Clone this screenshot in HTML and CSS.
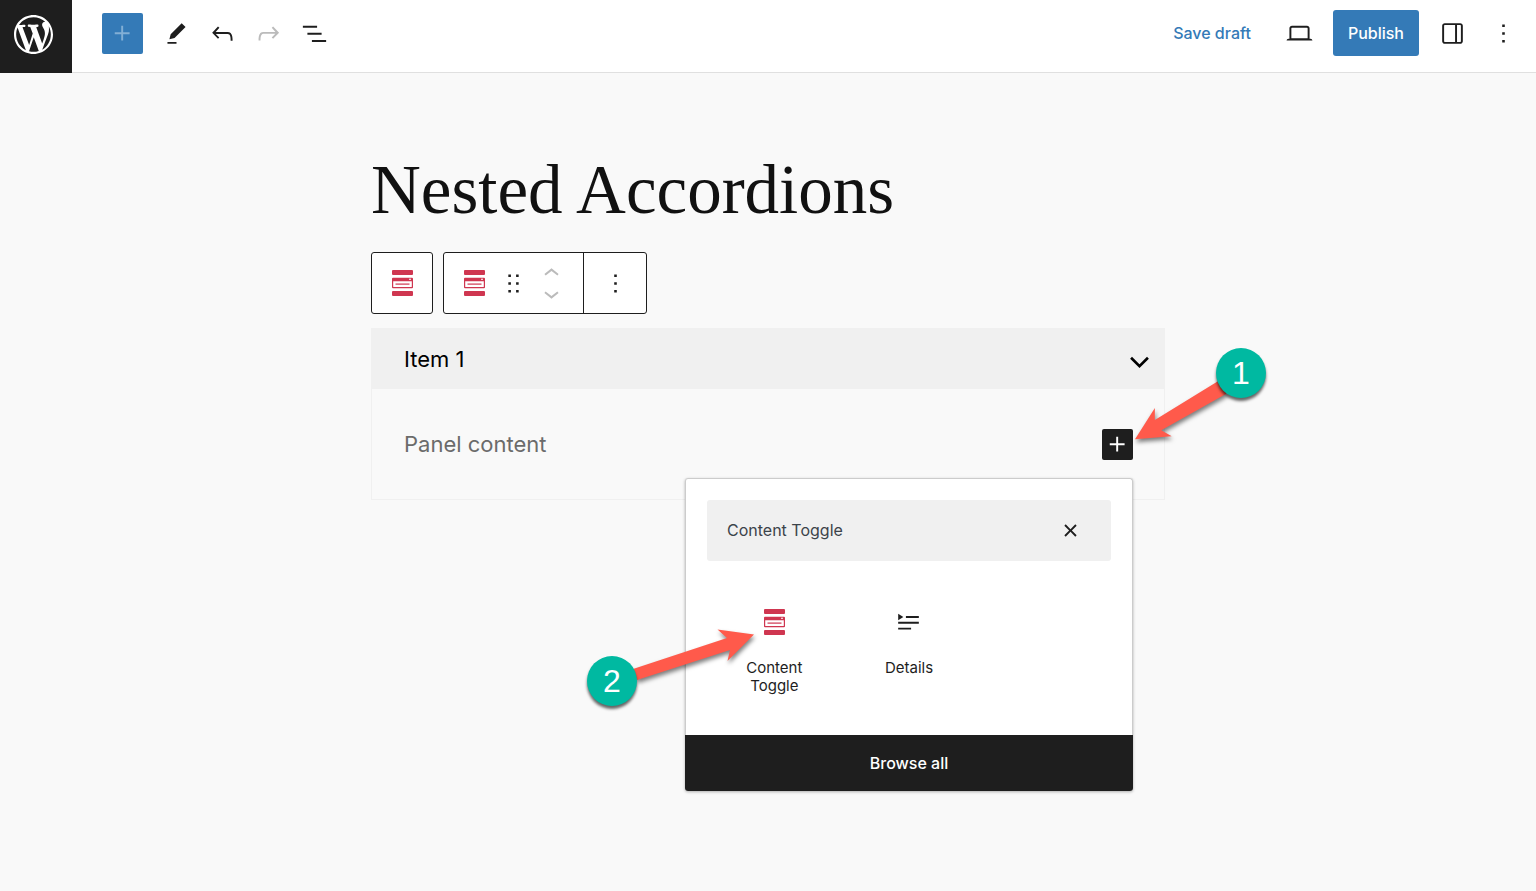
FILE: index.html
```html
<!DOCTYPE html>
<html lang="en">
<head>
<meta charset="utf-8">
<meta name="viewport" content="width=device-width, initial-scale=1">
<title>Nested Accordions</title>
<link rel="stylesheet" href="styles.css">
</head>
<body>
<svg class="sprite" aria-hidden="true">
  <symbol id="toggle" viewBox="0 0 21 26">
    <rect width="21" height="5" rx="1"/>
    <path fill-rule="evenodd" d="M1 7.700h19a1 1 0 0 1 1 1v8.600a1 1 0 0 1-1 1H1a1 1 0 0 1-1-1V8.700a1 1 0 0 1 1-1zM1.200 11.200v5.300a.6.6 0 0 0 .6.600h17.400a.6.6 0 0 0 .6-.6v-5.300zM17 8.800v1h2v-1z"/>
    <rect x="3.500" y="13.500" width="14" height="1.200"/>
    <rect y="21" width="21" height="5" rx="1"/>
  </symbol>
  <symbol id="plus" viewBox="0 0 24 24"><path d="M11 12.500V17.500H12.500V12.500H17.500V11H12.500V6H11V11H6V12.500H11Z"/></symbol>
  <symbol id="more" viewBox="0 0 24 24"><path d="M13 19h-2v-2h2v2zm0-6h-2v-2h2v2zm0-6h-2V5h2v2z"/></symbol>
</svg>

<header class="topbar">
  <a class="logo" href="#" aria-label="View posts">
    <svg viewBox="0 0 20 20"><path d="M20 10c0-5.510-4.490-10-10-10C4.480 0 0 4.490 0 10c0 5.520 4.480 10 10 10 5.510 0 10-4.480 10-10zM7.780 15.370L4.370 6.220c.55-.02 1.170-.08 1.170-.08.5-.06.44-1.130-.06-1.110 0 0-1.450.11-2.370.11-.18 0-.37 0-.58-.01C4.120 2.690 6.870 1.110 10 1.110c2.330 0 4.450.87 6.050 2.340-.68-.11-1.650.39-1.650 1.580 0 .74.45 1.360.9 2.100.35.61.55 1.360.55 2.460 0 1.490-1.400 5-1.400 5l-3.030-8.370c.54-.02.82-.17.82-.17.5-.05.44-1.250-.06-1.220 0 0-1.440.12-2.380.12-.87 0-2.330-.12-2.330-.12-.5-.03-.56 1.200-.06 1.220l.92.08 1.260 3.410zM17.410 10c.24-.64.74-1.870.43-4.250.7 1.290 1.050 2.710 1.050 4.250 0 3.290-1.730 6.240-4.400 7.780.97-2.590 1.940-5.200 2.920-7.780zM6.100 18.090C3.120 16.650 1.110 13.530 1.110 10c0-1.300.23-2.480.72-3.590C3.250 10.300 4.670 14.200 6.100 18.090zm4.030-6.630l2.580 6.980c-.86.29-1.760.45-2.710.45-.79 0-1.570-.11-2.290-.33.81-2.380 1.620-4.740 2.420-7.100z"/></svg>
  </a>
  <div class="tools">
    <button class="add" type="button" aria-label="Toggle block inserter"><svg class="icon"><use href="#plus"/></svg></button>
    <button class="tool" type="button" aria-label="Edit"><svg class="icon" viewBox="0 0 24 24"><path d="m19 7-3-3-8.500 8.500-1 4 4-1L19 7Zm-7 11.500H5V20h7v-1.500Z"/></svg></button>
    <button class="tool" type="button" aria-label="Undo"><svg class="icon" viewBox="0 0 24 24"><path d="M18.300 11.700c-.6-.6-1.400-.9-2.300-.9H6.700l2.900-3.300-1.100-1-4.500 5L8.500 16l1-1-2.700-2.700H16c.5 0 .9.2 1.300.5 1 1 1 3.400 1 4.500v.3h1.500v-.2c0-1.500 0-4.300-1.500-5.700z"/></svg></button>
    <button class="tool" type="button" aria-label="Redo" disabled><svg class="icon" viewBox="0 0 24 24"><path d="M15.600 6.500l-1.100 1 2.900 3.300H8c-.9 0-1.700.3-2.300.9-1.400 1.500-1.400 4.200-1.400 5.600v.2h1.500v-.3c0-1.100 0-3.500 1-4.500.3-.3.7-.5 1.300-.5h9.200L14.500 15l1.100 1.100 4.600-4.600-4.600-5z"/></svg></button>
    <button class="tool" type="button" aria-label="Document overview"><svg class="icon" viewBox="0 0 24 24"><path d="M3 6h11v1.500H3V6Zm3.500 5.500h11V13h-11v-1.500ZM21 17H10v1.500h11V17Z"/></svg></button>
  </div>
  <div class="actions">
    <button class="save" type="button">Save draft</button>
    <button class="tool" type="button" aria-label="Preview"><svg class="icon" viewBox="0 0 24 24"><path d="M20.500 16h-.7V8c0-1.100-.9-2-2-2H6.200c-1.100 0-2 .9-2 2v8h-.7c-.8 0-1.500.7-1.500 1.500h20c0-.8-.7-1.500-1.500-1.500zM5.700 8c0-.3.2-.5.5-.5h11.600c.3 0 .5.2.5.5v7.600H5.700V8z"/></svg></button>
    <button class="publish" type="button">Publish</button>
    <div class="panel-tools">
      <button class="tool" type="button" aria-label="Settings"><svg class="icon" viewBox="0 0 24 24"><path d="M18 4H6c-1.100 0-2 .9-2 2v12c0 1.100.9 2 2 2h12c1.100 0 2-.9 2-2V6c0-1.100-.9-2-2-2zm-4 14.500H6c-.3 0-.5-.2-.5-.5V6c0-.3.2-.5.5-.5h8v13zm4.500-.5c0 .3-.2.500-.5.500h-2.500v-13H18c.3 0 .5.2.5.500v12z"/></svg></button>
      <button class="tool" type="button" aria-label="Options"><svg class="icon"><use href="#more"/></svg></button>
    </div>
  </div>
</header>

<main class="canvas">
  <h1 class="title">Nested Accordions</h1>

  <div class="toolbars">
    <div class="toolbar">
      <button class="parent" type="button" aria-label="Select parent block"><svg class="toggle-icon"><use href="#toggle"/></svg></button>
    </div>
    <div class="toolbar">
      <div class="group">
        <button class="block-type" type="button" aria-label="Content Toggle"><svg class="toggle-icon"><use href="#toggle"/></svg></button>
        <button class="drag" type="button" aria-label="Drag"><svg class="icon" viewBox="0 0 24 24"><path d="M8 7h2V5H8v2zm0 6h2v-2H8v2zm0 6h2v-2H8v2zm6-14v2h2V5h-2zm0 8h2v-2h-2v2zm0 6h2v-2h-2v2z"/></svg></button>
        <div class="movers">
          <button type="button" aria-label="Move up" disabled><svg class="icon" viewBox="0 0 24 24"><path d="M6.500 12.400L12 8l5.500 4.400-.9 1.200L12 10l-4.500 3.600-1-1.200z"/></svg></button>
          <button type="button" aria-label="Move down" disabled><svg class="icon" viewBox="0 0 24 24"><path d="M17.500 11.600L12 16l-5.500-4.400.9-1.200L12 14l4.500-3.600 1 1.200z"/></svg></button>
        </div>
      </div>
      <button class="options" type="button" aria-label="Options"><svg class="icon"><use href="#more"/></svg></button>
    </div>
  </div>

  <section class="accordion">
    <button class="item" type="button" aria-expanded="true">Item 1
      <svg class="chevron" viewBox="0 0 18 12"><path d="M1 1.500l8 8 8-8"/></svg>
    </button>
    <div class="panel">
      <p class="hint">Panel content</p>
      <div class="inserter">
        <button class="insert" type="button" aria-label="Add block"><svg class="icon"><use href="#plus"/></svg></button>
        <div class="popover">
          <div class="popover-body">
            <div class="search">
              <input class="search-input" type="text" aria-label="Search blocks" value="Content Toggle">
              <button class="clear" type="button" aria-label="Reset search"><svg class="icon" viewBox="0 0 24 24"><path d="M12 13.060l3.712 3.713 1.061-1.060L13.061 12l3.712-3.712-1.060-1.060L12 10.938 8.288 7.227l-1.061 1.060L10.939 12l-3.712 3.712 1.060 1.061L12 13.061z"/></svg></button>
            </div>
            <div class="blocks">
              <button class="block" type="button"><span class="block-icon"><svg class="toggle-icon"><use href="#toggle"/></svg></span>Content Toggle</button>
              <button class="block" type="button"><span class="block-icon"><svg class="icon" viewBox="0 0 24 24"><path d="M4 16h10v1.500H4V16Zm0-4.500h16V13H4v-1.500ZM10 7h10v1.500H10V7Z"/><path d="m4 5.250 4 2.500-4 2.500v-5Z"/></svg></span>Details</button>
            </div>
          </div>
          <button class="browse" type="button">Browse all</button>
          <div class="callout callout-two">
            <svg class="arrow" viewBox="0 0 170 80"><path d="M167 5.500L130.500.5l9.500 8.500L46 40l4 11 93-30L140.500 32z"/></svg>
            <span class="badge">2</span>
          </div>
        </div>
        <div class="callout callout-one">
          <svg class="arrow" viewBox="0 0 132 94"><path d="M0 92L20 60.500v12L86 32l6 14-65.500 37L37 89z"/></svg>
          <span class="badge">1</span>
        </div>
      </div>
    </div>
  </section>
</main>
</body>
</html>
```
FILE: styles.css
```css
* { box-sizing: border-box; }

body {
  margin: 0;
  min-height: 100vh;
  background: #f9f9f9;
  color: #1e1e1e;
  font: 16px/20px Inter, "Liberation Sans", sans-serif;
}

button {
  display: flex;
  align-items: center;
  justify-content: center;
  margin: 0;
  padding: 0;
  border: 0;
  background: none;
  color: inherit;
  font: inherit;
}

.sprite { position: absolute; width: 0; height: 0; }
.icon { display: block; flex: none; width: 31px; height: 31px; fill: currentColor; }
.toggle-icon { display: block; flex: none; width: 21px; height: 26px; fill: #cf3650; }

.topbar {
  display: flex;
  height: 73px;
  background: #fff;
  border-bottom: 1px solid #e0e0e0;
}
.logo {
  display: flex;
  align-items: center;
  width: 72px;
  height: 73px;
  padding: 0 0 4px 14px;
  background: #1e1e1e;
}
.logo svg { width: 39px; height: 39px; fill: #fff; }
.tools, .actions { display: flex; align-items: center; padding-bottom: 6px; }
.tools { padding-left: 30px; }
.tool { width: 46px; height: 46px; }
.tool:disabled, .movers button:disabled { color: #bbb; }
.add {
  width: 41px;
  height: 41px;
  margin-right: 10px;
  border-radius: 2px;
  background: #347ab7;
  color: #82afd5;
}
.actions { gap: 10px; margin-left: auto; padding-right: 10px; }
.save { margin-right: 16px; color: #347ab7; font-weight: 500; }
.publish {
  height: 46px;
  padding: 0 15px;
  border-radius: 3px;
  background: #347ab7;
  color: #fff;
  font-weight: 500;
}
.panel-tools { display: flex; gap: 5px; }

.canvas { max-width: 794px; margin: 0 auto; padding-top: 77px; }
.title {
  margin: 0 0 22px;
  color: #111;
  font: 400 69px/80px "Liberation Serif", serif;
}

.toolbars { display: flex; gap: 10px; margin-bottom: 14px; }
.toolbar {
  display: flex;
  height: 62px;
  border: 1px solid #1e1e1e;
  border-radius: 3px;
  background: #fff;
}
.parent { width: 60px; }
.group { display: flex; padding: 0 16px 0 15px; }
.block-type { width: 31px; }
.drag { width: 46px; }
.movers { display: flex; flex-direction: column; justify-content: center; width: 31px; }
.movers button { height: 20px; }
.options { width: 63px; border-left: 1px solid #1e1e1e; }

.item {
  justify-content: space-between;
  width: 100%;
  height: 61px;
  padding: 0 16px 0 33px;
  background: #f0f0f0;
  color: #000;
  font-size: 22px;
}
.chevron { width: 19px; height: 13px; margin-top: 8px; fill: none; stroke: #000; stroke-width: 2.500; }
.panel {
  display: flex;
  align-items: center;
  justify-content: space-between;
  height: 111px;
  padding: 0 31px 0 32px;
  border: 1px solid #f0f0f0;
  border-top: 0;
}
.hint { margin: 0; color: #6b6b6b; font-size: 22px; }
.inserter { position: relative; }
.insert { width: 31px; height: 31px; border-radius: 2px; background: #1e1e1e; color: #fff; }

.popover {
  position: absolute;
  top: 49px;
  right: 0;
  width: 448px;
  border-radius: 3px;
  background: #fff;
  box-shadow: 0 1px 3px rgba(0, 0, 0, .3);
}
.popover-body {
  padding: 21px;
  border: 1px solid #ccc;
  border-bottom: 0;
  border-radius: 3px 3px 0 0;
}
.search { display: flex; height: 61px; border-radius: 3px; background: #f0f0f0; }
.search-input {
  flex: 1;
  min-width: 0;
  padding: 0 0 0 20px;
  border: 0;
  background: none;
  color: #3c434a;
  font: inherit;
}
.clear { width: 46px; margin-right: 18px; }
.blocks { display: grid; grid-template-columns: repeat(3, 1fr); padding: 36px 0 9px; }
.block {
  flex-direction: column;
  justify-content: flex-start;
  height: 108px;
  padding: 10px 24px 0;
  font-size: 15px;
  line-height: 18px;
}
.block-icon { display: flex; align-items: center; height: 31px; margin-bottom: 21px; }
.browse {
  width: 100%;
  height: 56px;
  border-radius: 0 0 3px 3px;
  background: #1e1e1e;
  color: #fff;
  font-weight: 500;
}

/* Numbered step markers drawn over the editor */
.callout { position: absolute; pointer-events: none; }
.arrow { display: block; overflow: visible; fill: #ff5a4b; filter: drop-shadow(1px 3px 2px rgba(0, 0, 0, .5)); }
.callout-one { left: 33px; bottom: 19px; width: 131px; height: 93px; }
.callout-two { left: -98px; top: 151px; width: 170px; height: 77px; }
.badge {
  position: absolute;
  display: flex;
  align-items: center;
  justify-content: center;
  width: 50px;
  height: 50px;
  border-radius: 50%;
  background: #00b9a1;
  box-shadow: 0 3px 3px rgba(0, 0, 0, .6);
  color: #fff;
  font: 32px/50px "Liberation Sans", sans-serif;
}
.callout-one .badge { top: 0; right: 0; }
.callout-two .badge { left: 0; bottom: 0; }
```
